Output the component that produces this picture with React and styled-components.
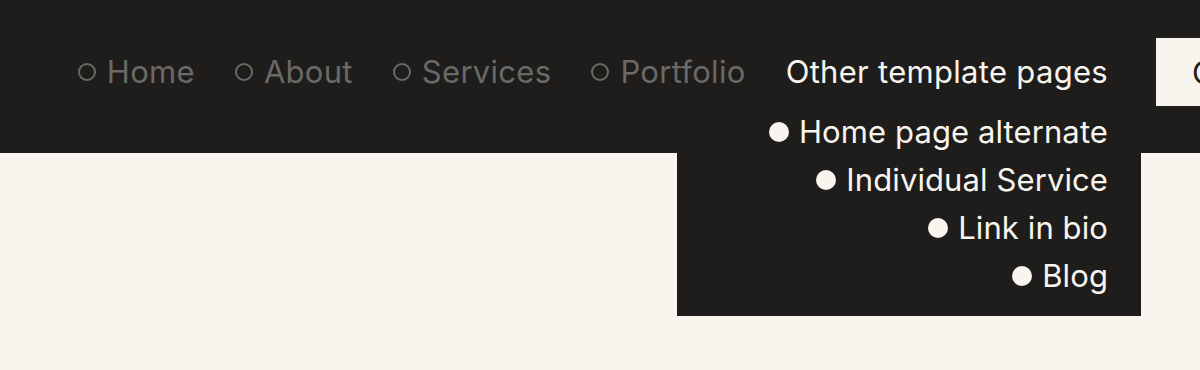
import React from 'react';
import styled, { createGlobalStyle } from 'styled-components';

const GlobalStyle = createGlobalStyle`
  html, body {
    margin: 0;
    padding: 0;
    background: #f8f4ee;
    overflow: hidden;
  }
  body {
    font-family: 'Inter', 'Liberation Sans', sans-serif;
  }
`;

const Page = styled.div`
  width: 1200px;
  height: 370px;
  background: #f8f4ee;
  overflow: hidden;
`;

const Header = styled.header`
  display: grid;
  grid-template-columns: 1fr 44px;
  column-gap: 48px;
  align-items: start;
  height: 153px;
  padding-top: 38px;
  box-sizing: border-box;
  background: #1e1d1b;
`;

const Nav = styled.ul`
  justify-self: end;
  display: flex;
  align-items: center;
  gap: 40px;
  height: 68px;
  margin: 0;
  padding: 0;
  list-style: none;
`;

const Item = styled.li`
  position: relative;
  display: flex;
  align-items: center;
  gap: 11px;
  font-size: 31px;
  line-height: 38px;
  letter-spacing: 0.3px;
  color: ${p => (p.$active ? '#f8f4ee' : '#6a6966')};
  white-space: nowrap;
`;

const Ring = styled.span`
  width: 18px;
  height: 18px;
  box-sizing: border-box;
  border: 2px solid #6a6966;
  border-radius: 50%;
  flex-shrink: 0;
`;

const Dropdown = styled.ul`
  position: absolute;
  top: 100%;
  right: -33px;
  width: 464px;
  box-sizing: border-box;
  margin: 0;
  padding: 17px 33px 16px 0;
  list-style: none;
  background: #1e1d1b;
  display: flex;
  flex-direction: column;
  align-items: flex-end;
`;

const SubItem = styled.li`
  display: flex;
  align-items: center;
  gap: 10px;
  height: 48px;
  font-size: 31px;
  letter-spacing: 0.1px;
  color: #f8f4ee;
  white-space: nowrap;
`;

const Dot = styled.span`
  width: 20px;
  height: 20px;
  border-radius: 50%;
  background: #f8f4ee;
  flex-shrink: 0;
`;

const ContactButton = styled.a`
  display: flex;
  align-items: center;
  width: 200px;
  height: 68px;
  padding-left: 36px;
  box-sizing: border-box;
  background: #f8f4ee;
  color: #1e1d1b;
  font-size: 31px;
  text-decoration: none;
  white-space: nowrap;
`;

const links = ['Home', 'About', 'Services', 'Portfolio'];
const pages = ['Home page alternate', 'Individual Service', 'Link in bio', 'Blog'];

const App = () => (
  <Page>
    <GlobalStyle />
    <Header>
      <Nav>
        {links.map(label => (
          <Item key={label}>
            <Ring />
            {label}
          </Item>
        ))}
        <Item $active>
          Other template pages
          <Dropdown>
            {pages.map(label => (
              <SubItem key={label}>
                <Dot />
                {label}
              </SubItem>
            ))}
          </Dropdown>
        </Item>
      </Nav>
      <ContactButton href="#">Contact</ContactButton>
    </Header>
  </Page>
);

export default App;
